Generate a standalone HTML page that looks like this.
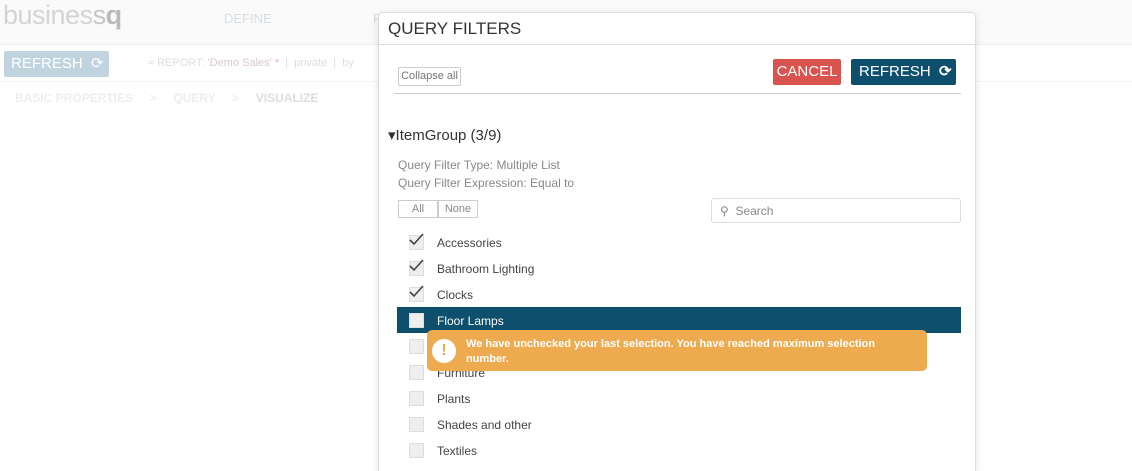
<!DOCTYPE html>
<html><head><style>
html,body{margin:0;width:1132px;height:471px;overflow:hidden;background:#fff;font-family:"Liberation Sans",sans-serif;position:relative}
.a{position:absolute}
.hdr{left:0;top:0;width:1132px;height:44px;background:#fafafa;border-bottom:1px solid #f0f0f0}
.bar2{left:0;top:45px;width:1132px;height:36px;border-bottom:1px solid #f3f3f3}
.modal{left:378px;top:12px;width:598px;height:459px;box-sizing:border-box;background:#fff;border:1px solid #ddd;border-bottom:none;border-radius:5px 5px 0 0;box-shadow:0 2px 8px rgba(0,0,0,.12)}
.item{position:absolute;left:397px;width:564px;height:26px;font-size:12px;color:#444}
.item .cb{position:absolute;left:12px;top:6px;width:13px;height:13px;background:#eee;border:1px solid #ddd}
.item .lb{position:absolute;left:40px;top:7px}
.item svg{position:absolute;left:12px;top:4px}
</style></head><body>
<div class="a hdr"></div>
<div class="a" style="left:3px;top:0px;font-size:27px;color:#d4d4d4;letter-spacing:-0.5px">busines<span style="color:#c6c6c6">s</span><b style="color:#bbb">q</b></div>
<div class="a" style="left:224px;top:11px;font-size:13px;color:#d5dde3">DEFINE</div>
<div class="a" style="left:373px;top:11px;font-size:13px;color:#ddd">R</div>
<div class="a bar2"></div>
<div class="a" style="left:4px;top:51px;width:105px;height:26px;background:#bfd4df;border-radius:2px;color:#fff;font-size:15px;line-height:26px;padding-left:7px;box-sizing:border-box">REFRESH &nbsp;⟳</div>
<div class="a" style="left:148px;top:57px;font-size:11px;color:#ddd">≈ REPORT: <span style="color:#d8c8c8">'Demo Sales'</span> <span style="color:#f0b0b0">*</span> &nbsp;| &nbsp;private &nbsp;| &nbsp;by</div>
<div class="a" style="left:15px;top:91px;font-size:12px;font-weight:bold;color:#eee">BASIC PROPERTIES &nbsp; &nbsp; &gt; &nbsp; &nbsp; QUERY &nbsp; &nbsp; &gt; &nbsp; &nbsp; <span style="color:#ddd">VISUALIZE</span></div>

<div class="a modal"></div>
<div class="a" style="left:388px;top:19px;font-size:17px;color:#333">QUERY FILTERS</div>
<div class="a" style="left:379px;top:44px;width:596px;border-top:1px solid #ddd"></div>
<div class="a" style="left:398px;top:67px;width:61px;height:17px;border:1px solid #ccc;border-radius:2px;font-size:11px;color:#777;line-height:17px;text-align:center">Collapse all</div>
<div class="a" style="left:773px;top:59px;width:68px;height:26px;background:#d9534f;color:#fff;font-size:15px;line-height:26px;text-align:center;border-radius:2px">CANCEL</div>
<div class="a" style="left:851px;top:59px;width:105px;height:26px;background:#0d4f6c;color:#fff;font-size:15px;line-height:26px;padding-left:8px;box-sizing:border-box;border-radius:2px">REFRESH &nbsp;<b>⟳</b></div>
<div class="a" style="left:394px;top:93px;width:567px;border-top:1px solid #ccc"></div>
<div class="a" style="left:388px;top:126px;font-size:15px;color:#333">▾ItemGroup (3/9)</div>
<div class="a" style="left:398px;top:156px;font-size:12px;color:#888;line-height:18px">Query Filter Type: Multiple List<br>Query Filter Expression: Equal to</div>
<div class="a" style="left:398px;top:200px;width:38px;height:16px;border:1px solid #ccc;font-size:11px;color:#888;line-height:16px;text-align:center">All</div>
<div class="a" style="left:438px;top:200px;width:38px;height:16px;border:1px solid #ccc;font-size:11px;color:#888;line-height:16px;text-align:center">None</div>
<div class="a" style="left:711px;top:198px;width:250px;height:25px;border:1px solid #ddd;border-radius:3px;font-size:12px;color:#888;line-height:25px;padding-left:8px;box-sizing:border-box">⚲ &nbsp;Search</div>

<div class="item" style="top:229px"><div class="cb"></div><svg width="16" height="14"><path d="M1 7l4 4 9-10" fill="none" stroke="#444" stroke-width="1.6"/></svg><div class="lb">Accessories</div></div>
<div class="item" style="top:255px"><div class="cb"></div><svg width="16" height="14"><path d="M1 7l4 4 9-10" fill="none" stroke="#444" stroke-width="1.6"/></svg><div class="lb">Bathroom Lighting</div></div>
<div class="item" style="top:281px"><div class="cb"></div><svg width="16" height="14"><path d="M1 7l4 4 9-10" fill="none" stroke="#444" stroke-width="1.6"/></svg><div class="lb">Clocks</div></div>
<div class="item" style="top:307px;background:#0d4f6c;color:#fff"><div class="cb"></div><div class="lb">Floor Lamps</div></div>
<div class="item" style="top:333px"><div class="cb"></div></div>
<div class="item" style="top:359px"><div class="cb"></div><div class="lb">Furniture</div></div>
<div class="item" style="top:385px"><div class="cb"></div><div class="lb">Plants</div></div>
<div class="item" style="top:411px"><div class="cb"></div><div class="lb">Shades and other</div></div>
<div class="item" style="top:437px"><div class="cb"></div><div class="lb">Textiles</div></div>

<div class="a" style="left:427px;top:330px;width:500px;height:41px;background:#eeaa4e;border-radius:5px"></div>
<div class="a" style="left:432px;top:339px;width:24px;height:24px;border-radius:50%;background:#fff;color:#eeaa4e;font-weight:bold;font-size:16px;text-align:center;line-height:24px">!</div>
<div class="a" style="left:466px;top:337px;width:450px;font-size:11px;font-weight:bold;color:#fff;line-height:15px">We have unchecked your last selection. You have reached maximum selection number.</div>
</body></html>
